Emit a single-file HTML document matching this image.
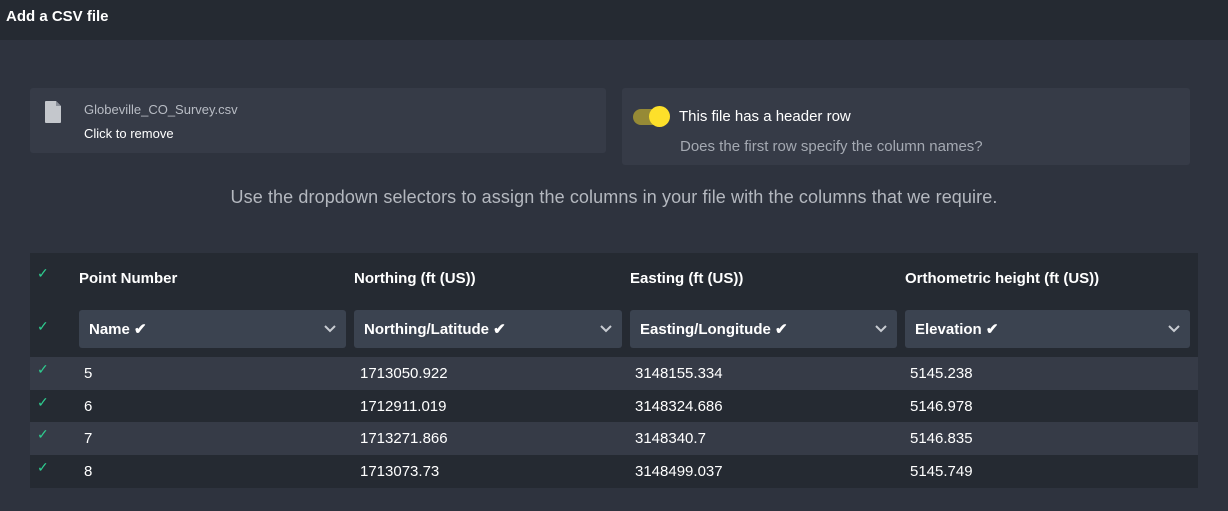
<!DOCTYPE html>
<html><head><style>
*{box-sizing:border-box;margin:0;padding:0}
body{width:1228px;height:511px;background:#2e333e;font-family:"Liberation Sans",sans-serif;color:#fff;position:relative;overflow:hidden}
.top{position:absolute;left:0;top:0;width:1228px;height:40px;background:#252a32;font-size:15px;font-weight:bold;padding:8px 0 0 6px}
.card{position:absolute;background:#363b47;border-radius:3px}
.abs{position:absolute}
.tbl{position:absolute;left:30px;top:253px;width:1168px;height:235px;background:#252a32}
.row{position:absolute;left:0;width:1168px;height:33px}
.ck{position:absolute;left:7px;color:#2ecc8f;font-size:14px}
.c{position:absolute;font-size:15px}
.dd{position:absolute;top:57px;height:38px;background:#3b4350;border-radius:3px;font-size:15px;font-weight:bold;padding:10px 0 0 10px}
.dd svg{position:absolute;right:10px;top:15px}
.h{position:absolute;top:17px;font-size:15px;font-weight:bold}
</style></head><body>
<div class="top">Add a CSV file</div>
<div class="card" style="left:30px;top:88px;width:576px;height:65px">
<svg class="abs" style="left:14px;top:12px" width="18" height="24" viewBox="0 0 18 24"><path d="M2 1h10l5 5v16a1 1 0 0 1-1 1H2a1 1 0 0 1-1-1V2a1 1 0 0 1 1-1z" fill="#c4c7cc"/><path d="M12 1v5h5" fill="#8a8f99"/></svg>
<div class="abs" style="left:54px;top:14px;font-size:13px;color:#b8bcc4">Globeville_CO_Survey.csv</div>
<div class="abs" style="left:54px;top:38px;font-size:13px">Click to remove</div>
</div>
<div class="card" style="left:622px;top:88px;width:568px;height:77px">
<div class="abs" style="left:11px;top:21px;width:36px;height:16px;border-radius:8px;background:#968a36"></div>
<div class="abs" style="left:27px;top:18px;width:21px;height:21px;border-radius:50%;background:#fde02a"></div>
<div class="abs" style="left:57px;top:20px;font-size:15px">This file has a header row</div>
<div class="abs" style="left:58px;top:50px;font-size:15px;color:#a4a9b2">Does the first row specify the column names?</div>
</div>
<div class="abs" style="left:0;width:1228px;top:187px;text-align:center;font-size:18px;letter-spacing:0.1px;color:#b4b8bf">Use the dropdown selectors to assign the columns in your file with the columns that we require.</div>
<div class="tbl">
<div class="ck" style="top:12px">✓</div>
<div class="h" style="left:49px">Point Number</div>
<div class="h" style="left:324px">Northing (ft (US))</div>
<div class="h" style="left:600px">Easting (ft (US))</div>
<div class="h" style="left:875px">Orthometric height (ft (US))</div>
<div class="ck" style="top:65px">✓</div>
<div class="dd" style="left:49px;width:267px">Name ✔<svg width="12" height="8"><path d="M1 1l5 5 5-5" stroke="#c8ccd2" stroke-width="2" fill="none"/></svg></div>
<div class="dd" style="left:324px;width:268px">Northing/Latitude ✔<svg width="12" height="8"><path d="M1 1l5 5 5-5" stroke="#c8ccd2" stroke-width="2" fill="none"/></svg></div>
<div class="dd" style="left:600px;width:267px">Easting/Longitude ✔<svg width="12" height="8"><path d="M1 1l5 5 5-5" stroke="#c8ccd2" stroke-width="2" fill="none"/></svg></div>
<div class="dd" style="left:875px;width:285px">Elevation ✔<svg width="12" height="8"><path d="M1 1l5 5 5-5" stroke="#c8ccd2" stroke-width="2" fill="none"/></svg></div>
<div class="row" style="top:104px;background:#363b47"><div class="ck" style="top:4px">✓</div><div class="c" style="left:54px;top:8px">5</div><div class="c" style="left:330px;top:8px">1713050.922</div><div class="c" style="left:605px;top:8px">3148155.334</div><div class="c" style="left:880px;top:8px">5145.238</div></div>
<div class="row" style="top:137px"><div class="ck" style="top:4px">✓</div><div class="c" style="left:54px;top:8px">6</div><div class="c" style="left:330px;top:8px">1712911.019</div><div class="c" style="left:605px;top:8px">3148324.686</div><div class="c" style="left:880px;top:8px">5146.978</div></div>
<div class="row" style="top:169px;background:#363b47"><div class="ck" style="top:4px">✓</div><div class="c" style="left:54px;top:8px">7</div><div class="c" style="left:330px;top:8px">1713271.866</div><div class="c" style="left:605px;top:8px">3148340.7</div><div class="c" style="left:880px;top:8px">5146.835</div></div>
<div class="row" style="top:202px"><div class="ck" style="top:4px">✓</div><div class="c" style="left:54px;top:8px">8</div><div class="c" style="left:330px;top:8px">1713073.73</div><div class="c" style="left:605px;top:8px">3148499.037</div><div class="c" style="left:880px;top:8px">5145.749</div></div>
</div>
</body></html>
